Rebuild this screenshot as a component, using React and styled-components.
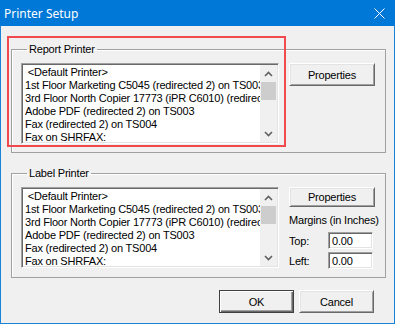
import React from 'react';
import styled, { createGlobalStyle } from 'styled-components';

const GlobalStyle = createGlobalStyle`
  html, body {
    margin: 0;
    padding: 0;
    background: #f0f0f0;
  }
  * {
    box-sizing: border-box;
  }
`;

const UI_FONT = `"Liberation Sans", Arial, sans-serif`;

const Window = styled.div`
  position: relative;
  width: 395px;
  height: 324px;
  display: flex;
  flex-direction: column;
  border: 1px solid #1883d7;
  border-top: none;
  background: #f0f0f0;
  font-family: ${UI_FONT};
  font-size: 11px;
  letter-spacing: -0.2px;
  color: #000;
`;

const TitleBar = styled.div`
  height: 26px;
  margin: 0 -1px;
  padding: 0 10px 0 4px;
  display: flex;
  align-items: center;
  justify-content: space-between;
  background: #0078d7;
  color: #fff;
  font-family: "Noto Sans", "Open Sans", sans-serif;
  font-size: 12px;
  letter-spacing: 0;
`;

const CloseIcon = styled.svg`
  width: 11px;
  height: 11px;
  display: block;
`;

const Body = styled.div`
  flex: 1;
  display: flex;
  flex-direction: column;
  padding: 17px 0 0 10px;
`;

const Group = styled.fieldset`
  margin: ${p => p.$top || 0}px 0 0 0;
  width: 375px;
  padding: 7px 8px 8px 9px;
  border: 1px solid #a0a0a0;
  box-shadow: inset 1px 1px 0 #fff;
  display: flex;
  gap: 10px;
  min-inline-size: 0;
`;

const Legend = styled.legend`
  margin-left: 6px;
  padding: 0 2px;
  line-height: 13px;
`;

const ListBox = styled.div`
  width: 258px;
  height: 81px;
  flex: none;
  display: flex;
  background: #fff;
  border-top: 1px solid #a0a0a0;
  border-left: 1px solid #a0a0a0;
  border-right: 1px solid #fff;
  border-bottom: 1px solid #fff;
  box-shadow: inset 1px 1px 0 #696969, inset -1px -1px 0 #e3e3e3;
  padding: 1px;
`;

const Items = styled.ul`
  flex: 1;
  margin: 0;
  padding: 1px 0 0 2px;
  list-style: none;
  overflow: hidden;
`;

const Item = styled.li`
  line-height: 13px;
  height: 13px;
  white-space: pre;
`;

const ScrollBar = styled.div`
  width: 17px;
  flex: none;
  display: flex;
  flex-direction: column;
  background: #f0f0f0;
`;

const Arrow = styled.div`
  height: 17px;
  display: flex;
  align-items: center;
  justify-content: center;
`;

const Thumb = styled.div`
  height: 18px;
  margin: 0 1px;
  background: #cdcdcd;
`;

const Track = styled.div`
  flex: 1;
`;

const Side = styled.div`
  display: flex;
  flex-direction: column;
  align-items: flex-start;
`;

const Button = styled.button`
  width: ${p => p.$w || 86}px;
  height: ${p => p.$h || 23}px;
  padding: 0;
  font-family: ${UI_FONT};
  font-size: 11px;
  letter-spacing: -0.2px;
  color: #000;
  background: #f0f0f0;
  border-top: 1px solid ${p => (p.$default ? '#404040' : '#fff')};
  border-left: 1px solid ${p => (p.$default ? '#404040' : '#fff')};
  border-right: 1px solid ${p => (p.$default ? '#404040' : '#696969')};
  border-bottom: 1px solid ${p => (p.$default ? '#404040' : '#696969')};
  box-shadow: ${p =>
    p.$default
      ? 'inset 1px 1px 0 #fff, inset -1px -1px 0 #696969, inset -2px -2px 0 #a0a0a0'
      : 'inset 1px 1px 0 #e3e3e3, inset -1px -1px 0 #a0a0a0'};
`;

const MarginsLabel = styled.div`
  margin-top: 6px;
  line-height: 14px;
  white-space: nowrap;
`;

const MarginRow = styled.div`
  display: flex;
  align-items: center;
  margin-top: ${p => p.$gap}px;
`;

const RowLabel = styled.span`
  width: 39px;
`;

const TextBox = styled.div`
  width: 45px;
  height: 17px;
  padding: 2px 0 0 3px;
  line-height: 13px;
  background: #fff;
  border-top: 1px solid #a0a0a0;
  border-left: 1px solid #a0a0a0;
  border-right: 1px solid #fff;
  border-bottom: 1px solid #fff;
  box-shadow: inset 1px 1px 0 #696969, inset -1px -1px 0 #e3e3e3;
`;

const Footer = styled.div`
  display: flex;
  justify-content: flex-end;
  gap: 5px;
  padding: 12px 20px 0 0;
`;

const Highlight = styled.div`
  position: absolute;
  left: 6px;
  top: 36px;
  width: 279px;
  height: 111px;
  border: 2px solid #f04a4f;
  pointer-events: none;
`;

const printers = [
  ' <Default Printer>',
  '1st Floor Marketing C5045 (redirected 2) on TS003',
  '3rd Floor North Copier 17773 (iPR C6010) (redirected 2) on TS003',
  'Adobe PDF (redirected 2) on TS003',
  'Fax (redirected 2) on TS004',
  'Fax on SHRFAX:',
  'Microsoft Print to PDF (redirected 2) on TS004',
  'Microsoft XPS Document Writer (redirected 2)',
];

function Chevron({ up }) {
  return (
    <svg width="9" height="6" viewBox="0 0 9 6">
      <path
        d={up ? 'M1 5 L4.5 1.5 L8 5' : 'M1 1 L4.5 4.5 L8 1'}
        fill="none"
        stroke="#606060"
        strokeWidth="1.6"
      />
    </svg>
  );
}

function PrinterList() {
  return (
    <ListBox>
      <Items>
        {printers.map(p => (
          <Item key={p}>{p}</Item>
        ))}
      </Items>
      <ScrollBar>
        <Arrow>
          <Chevron up />
        </Arrow>
        <Thumb />
        <Track />
        <Arrow>
          <Chevron />
        </Arrow>
      </ScrollBar>
    </ListBox>
  );
}

export default function App() {
  return (
    <>
      <GlobalStyle />
      <Window>
        <TitleBar>
          <span>Printer Setup</span>
          <CloseIcon viewBox="0 0 11 11">
            <path d="M0.5 0.5 L10.5 10.5 M10.5 0.5 L0.5 10.5" stroke="#fff" strokeWidth="1" />
          </CloseIcon>
        </TitleBar>
        <Body>
          <Group>
            <Legend>Report Printer</Legend>
            <PrinterList />
            <Side>
              <Button>Properties</Button>
            </Side>
          </Group>
          <Group $top={14}>
            <Legend>Label Printer</Legend>
            <PrinterList />
            <Side>
              <Button $h={20}>Properties</Button>
              <MarginsLabel>Margins (in Inches)</MarginsLabel>
              <MarginRow $gap={5}>
                <RowLabel>Top:</RowLabel>
                <TextBox>0.00</TextBox>
              </MarginRow>
              <MarginRow $gap={3}>
                <RowLabel>Left:</RowLabel>
                <TextBox>0.00</TextBox>
              </MarginRow>
            </Side>
          </Group>
          <Footer>
            <Button $w={75} $default>OK</Button>
            <Button $w={75}>Cancel</Button>
          </Footer>
        </Body>
        <Highlight />
      </Window>
    </>
  );
}
